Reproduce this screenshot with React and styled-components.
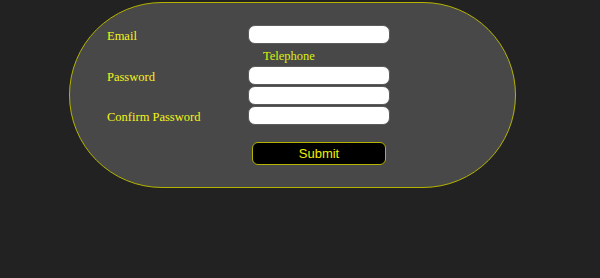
import React from 'react';
import styled, { createGlobalStyle } from 'styled-components';

const GlobalStyle = createGlobalStyle`
  html, body {
    margin: 0;
    padding: 0;
    background: #222222;
  }
  body {
    font-family: "Liberation Serif", serif;
  }
`;

const Page = styled.div`
  width: 600px;
  height: 278px;
  padding-top: 2px;
  box-sizing: border-box;
`;

const Pill = styled.form`
  margin-left: 69px;
  width: 447px;
  height: 186px;
  box-sizing: border-box;
  background: #484848;
  border: 1px solid #b4b400;
  border-radius: 93px;
  padding: 22px 0 0 37px;
`;

const Grid = styled.div`
  display: grid;
  grid-template-columns: 141px 142px;
  row-gap: 1px;
  align-items: center;
`;

const Label = styled.label`
  color: #f4f418;
  font-size: 12.5px;
  height: 19px;
  line-height: 22px;
`;

const SubLabel = styled.span`
  color: #d8f010;
  font-size: 12.5px;
  padding-left: 15px;
  height: 20px;
  line-height: 22px;
`;

const Input = styled.input`
  display: block;
  width: 142px;
  height: 19px;
  box-sizing: border-box;
  border: 1px solid #5c5c5c;
  border-radius: 7px;
  background: #ffffff;
  outline: none;
  padding: 0 6px;
`;

const Submit = styled.button`
  margin: 16px 0 0 4px;
  width: 134px;
  height: 23px;
  box-sizing: border-box;
  background: #000000;
  color: #f0f000;
  border: 1px solid #b4b400;
  border-radius: 6px;
  font-family: "Liberation Sans", Arial, sans-serif;
  font-size: 13px;
  cursor: pointer;
`;

export default function App() {
  return (
    <Page>
      <GlobalStyle />
      <Pill onSubmit={(e) => e.preventDefault()}>
        <Grid>
          <Label htmlFor="email">Email</Label>
          <Input id="email" type="email" />
          <span />
          <SubLabel>Telephone</SubLabel>
          <Label htmlFor="password">Password</Label>
          <Input id="password" type="password" />
          <span />
          <Input id="telephone" type="tel" />
          <Label htmlFor="confirm">Confirm Password</Label>
          <Input id="confirm" type="password" />
          <span />
          <Submit type="submit">Submit</Submit>
        </Grid>
      </Pill>
    </Page>
  );
}
